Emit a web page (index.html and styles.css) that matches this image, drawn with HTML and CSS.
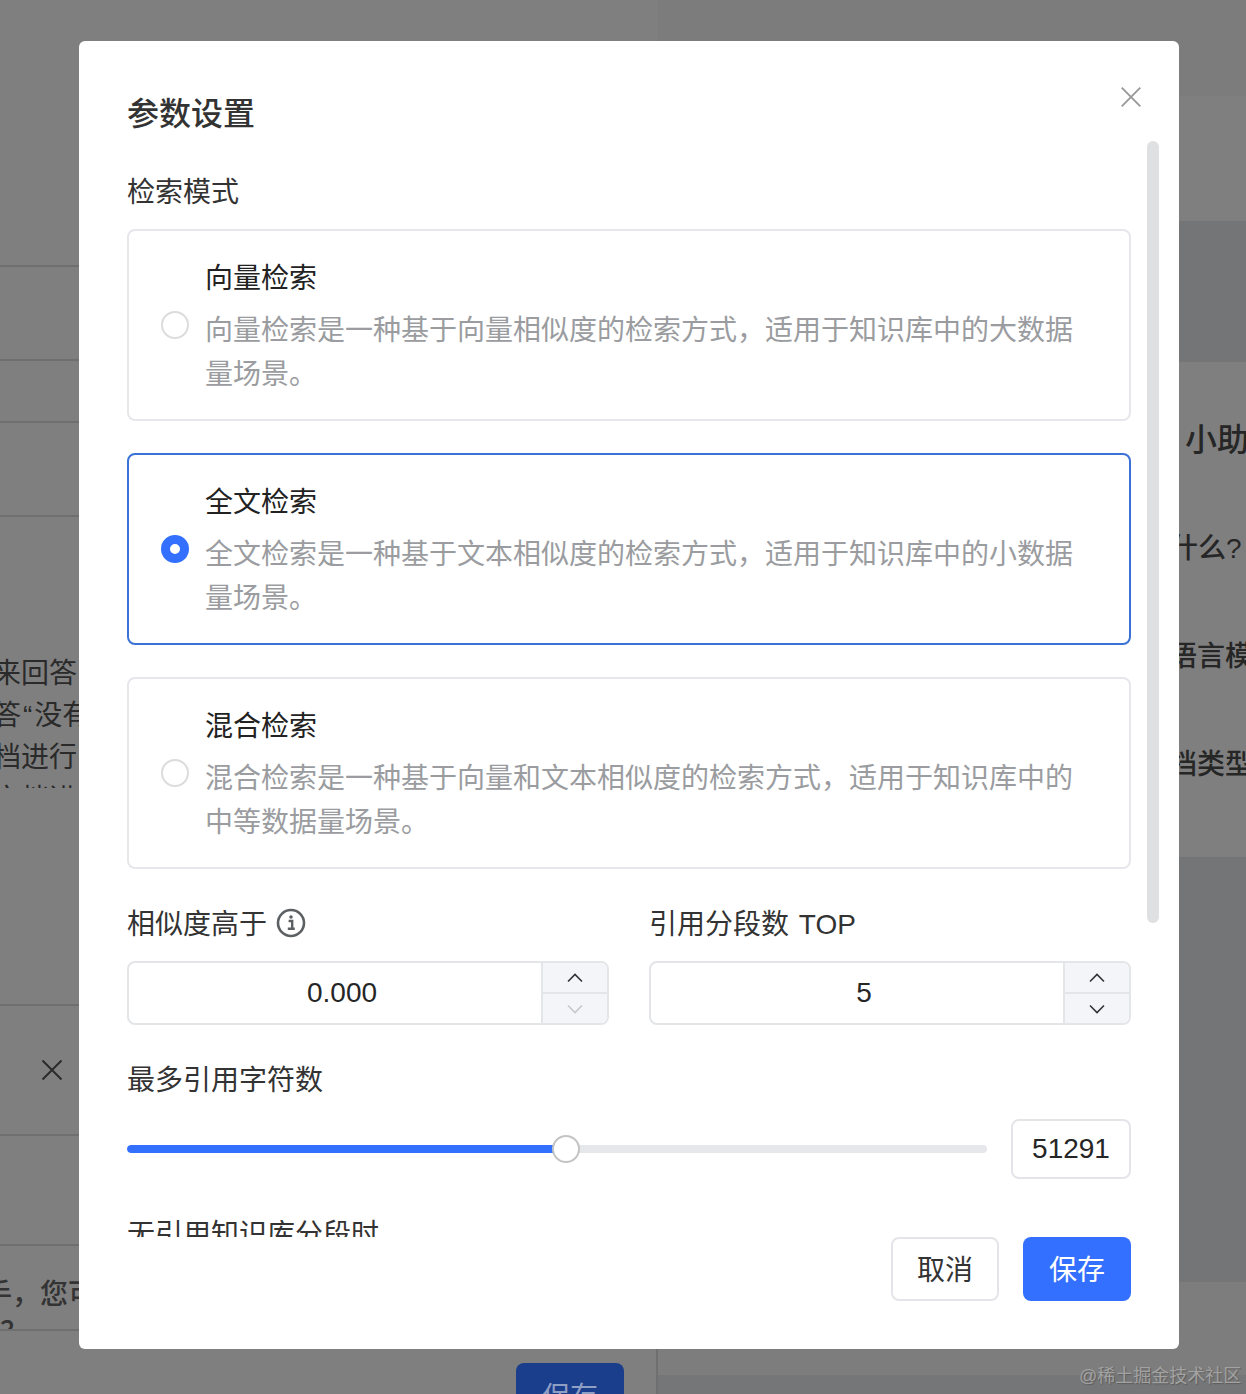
FILE: index.html
```html
<!DOCTYPE html>
<html lang="zh-CN">
<head>
<meta charset="utf-8">
<title>参数设置</title>
<link rel="stylesheet" href="styles.css">
</head>
<body>
<div class="page">
  <div class="bg-left">
    <div class="bl-row bl-r1"></div>
    <div class="bl-row bl-r2"></div>
    <div class="bl-row bl-r3"></div>
    <div class="bl-row bl-r4"></div>
    <div class="bl-text">
      <p>来回答，</p>
      <p>答<span class="bl-quote">“</span>没有</p>
      <p>档进行</p>
      <p>文档进</p>
    </div>
    <div class="bl-row bl-r5"></div>
    <div class="bl-row bl-r6">
      <svg class="bl-x" width="22" height="22" viewBox="0 0 22 22"><path d="M1.5 1.5l19 19M20.5 1.5l-19 19" stroke="#2b2b2b" stroke-width="2" fill="none"/></svg>
    </div>
    <div class="bl-row bl-r7"></div>
    <div class="bl-row bl-r8"><span>手，您可</span><span class="bl-q">？</span></div>
    <div class="bl-foot"><button class="bl-save">保存</button></div>
  </div>
  <div class="bg-right">
    <div class="br-band br-b1"></div>
    <div class="br-band br-b2"></div>
    <div class="br-band br-b3"></div>
    <div class="br-band br-lead"><span class="br-t1">小助</span></div>
    <div class="br-band br-b4"><span class="br-t2">什么?</span></div>
    <div class="br-band br-b4"><span class="br-t3">语言模型</span></div>
    <div class="br-band br-b4"><span class="br-t3">档类型</span></div>
    <div class="br-band br-b5"></div>
    <div class="br-band br-b6"></div>
    <div class="br-band br-b7"></div>
    <div class="br-band br-b8"></div>
  </div>

  <span class="watermark">@稀土掘金技术社区</span>

  <section class="modal">
    <button class="close" aria-label="关闭">
      <svg width="20" height="20" viewBox="0 0 20 20"><path d="M.7.7l18.6 18.6M19.3.7L.7 19.3" stroke="#9a9a9a" stroke-width="1.9" fill="none"/></svg>
    </button>
    <header class="modal-head"><h2 class="modal-title">参数设置</h2></header>
    <div class="scrollbar"></div>
    <div class="modal-body">
      <div class="label">检索模式</div>
      <div class="cards">
        <div class="card">
          <span class="radio"></span>
          <div class="card-text">
            <div class="card-title">向量检索</div>
            <div class="card-desc">向量检索是一种基于向量相似度的检索方式，适用于知识库中的大数据量场景。</div>
          </div>
        </div>
        <div class="card card-on">
          <span class="radio radio-on"></span>
          <div class="card-text">
            <div class="card-title">全文检索</div>
            <div class="card-desc">全文检索是一种基于文本相似度的检索方式，适用于知识库中的小数据量场景。</div>
          </div>
        </div>
        <div class="card">
          <span class="radio"></span>
          <div class="card-text">
            <div class="card-title">混合检索</div>
            <div class="card-desc">混合检索是一种基于向量和文本相似度的检索方式，适用于知识库中的中等数据量场景。</div>
          </div>
        </div>
      </div>

      <div class="fields">
        <div class="field">
          <div class="label label-icon">相似度高于
            <svg class="info" width="30" height="30" viewBox="0 0 30 30"><circle cx="15" cy="15" r="13" fill="none" stroke="#5d6063" stroke-width="2.6"/><path d="M12.6 13h3.6v7.2M11.8 20.8h7" fill="none" stroke="#5d6063" stroke-width="2.4"/><circle cx="15" cy="9" r="1.8" fill="#5d6063"/></svg>
          </div>
          <div class="number">
            <div class="number-val">0.000</div>
            <div class="stepper">
              <div class="step"><svg width="16" height="10" viewBox="0 0 16 10"><path d="M1 8.5l7-7 7 7" fill="none" stroke="#333" stroke-width="1.6"/></svg></div>
              <div class="step"><svg width="16" height="10" viewBox="0 0 16 10"><path d="M1 1.5l7 7 7-7" fill="none" stroke="#c6c8cc" stroke-width="1.6"/></svg></div>
            </div>
          </div>
        </div>
        <div class="field">
          <div class="label">引用分段数 <span class="label-latin">TOP</span></div>
          <div class="number">
            <div class="number-val">5</div>
            <div class="stepper">
              <div class="step"><svg width="16" height="10" viewBox="0 0 16 10"><path d="M1 8.5l7-7 7 7" fill="none" stroke="#333" stroke-width="1.6"/></svg></div>
              <div class="step"><svg width="16" height="10" viewBox="0 0 16 10"><path d="M1 1.5l7 7 7-7" fill="none" stroke="#333" stroke-width="1.6"/></svg></div>
            </div>
          </div>
        </div>
      </div>

      <div class="label label-top">最多引用字符数</div>
      <div class="slider-row">
        <div class="slider">
          <div class="slider-track">
            <div class="slider-fill" style="width:439px"></div>
          </div>
          <span class="slider-thumb"></span>
        </div>
        <div class="slider-val">51291</div>
      </div>

      <div class="label label-top">无引用知识库分段时</div>
    </div>
    <footer class="modal-foot">
      <button class="btn">取消</button>
      <button class="btn btn-primary">保存</button>
    </footer>
  </section>
</div>
</body>
</html>
```

FILE: styles.css
```css
* { box-sizing: border-box; }
html, body { margin: 0; padding: 0; }
body {
  font-family: "Liberation Sans", "Noto Sans CJK SC", sans-serif;
  color: #222;
}
p { margin: 0; }
button { font-family: inherit; }

.page {
  position: relative;
  display: flex;
  width: 1246px;
  height: 1394px;
  overflow: hidden;
  background: #7f7f7f;
}

/* dimmed page behind the dialog */
.bg-left {
  width: 658px;
  flex: none;
  display: flex;
  flex-direction: column;
}
.bl-row { border-bottom: 2px solid #6f6f6f; flex: none; }
.bl-r1 { height: 267px; }
.bl-r2 { height: 94px; }
.bl-r3 { height: 62px; }
.bl-r4 { height: 94px; }
.bl-text {
  height: 271px;
  padding-top: 136px;
  overflow: hidden;
  font-size: 28px;
  line-height: 42px;
  color: #2a2a2a;
  white-space: nowrap;
  margin-left: -7px;
}
.bl-quote { padding: 0 2px; }
.bl-r5 { height: 218px; }
.bl-r6 { height: 130px; display: flex; align-items: center; padding-left: 41px; }
.bl-r7 { height: 110px; }
.bl-r8 {
  height: 85px;
  padding-top: 28px;
  overflow: hidden;
  font-size: 28px;
  line-height: 42px;
  font-weight: 500;
  color: #333;
  white-space: nowrap;
  margin-left: -16px;
  display: flex;
  flex-direction: column;
}
.bl-q { padding-left: 16px; line-height: 34px; }
.bl-foot {
  flex: 1;
  display: flex;
  justify-content: flex-end;
  padding: 32px 32px 0 0;
  border-right: 2px solid #6f6f6f;
  overflow: hidden;
}
.bl-save {
  width: 108px;
  height: 64px;
  border: 0;
  border-radius: 8px;
  background: #1b3e8c;
  color: #8f9fc4;
  font-size: 28px;
  flex: none;
}

.bg-right { flex: 1; min-width: 0; display: flex; flex-direction: column; }
.br-band { flex: none; overflow: hidden; white-space: nowrap; font-size: 28px; font-weight: 500; color: #262626; }
.br-b1 { height: 96px; background: #7c7c7c; }
.br-b2 { height: 125px; background: #7f7f7f; }
.br-b3 { height: 141px; background: #747576; }
.br-lead { height: 131px; padding-top: 57px; font-size: 32px; line-height: 42px; background: #7f7f7f; }
.br-b4 { height: 108px; line-height: 112px; background: #7f7f7f; }
.br-b5 { height: 40px; background: #7f7f7f; }
.br-b6 { height: 425px; background: #747576; }
.br-b7 { height: 93px; background: #7d7d7d; }
.br-b8 { flex: 1; background: #757677; }
.br-t1, .br-t2, .br-t3 { display: block; }
.br-t1 { padding-left: 527px; }
.br-t2 { padding-left: 512px; }
.br-t3 { padding-left: 511px; }

.watermark {
  position: absolute;
  left: 1079px;
  top: 1365px;
  font-size: 18px;
  line-height: 22px;
  color: #a2a2a2;
  white-space: nowrap;
  text-shadow: 1px 1px 1px #5c5c5c;
}

/* dialog */
.modal {
  position: absolute;
  left: 79px;
  top: 41px;
  width: 1100px;
  height: 1308px;
  background: #fff;
  border-radius: 6px;
  display: flex;
  flex-direction: column;
}
.modal-head { padding: 51px 48px 0; height: 100px; flex: none; }
.modal-title {
  margin: 0;
  font-size: 32px;
  line-height: 44px;
  font-weight: 500;
  color: #333;
}
.close {
  position: absolute;
  left: 1042px;
  top: 46px;
  width: 20px;
  height: 20px;
  padding: 0;
  border: 0;
  background: none;
  display: flex;
}
.scrollbar {
  position: absolute;
  left: 1068px;
  top: 100px;
  width: 12px;
  height: 782px;
  border-radius: 6px;
  background: #dfe0e2;
}
.modal-body {
  flex: 1;
  min-height: 0;
  overflow: hidden;
  padding: 28px 48px 0;
}
.label {
  height: 44px;
  font-size: 28px;
  line-height: 48px;
  color: #333;
  margin-bottom: 16px;
}
.label-top { margin-top: 32px; }
.label-icon { display: flex; align-items: center; gap: 9px; padding-top: 4px; }
.label-latin { margin-left: 2px; }
.info { flex: none; margin-top: -4px; }

.cards { display: flex; flex-direction: column; gap: 32px; }
.card {
  display: flex;
  align-items: center;
  gap: 16px;
  height: 192px;
  padding: 20px 32px;
  border: 2px solid #e6e7eb;
  border-radius: 8px;
}
.card-on { border-color: #3b72d6; }
.radio {
  width: 28px;
  height: 28px;
  flex: none;
  border: 2px solid #dcdcdc;
  border-radius: 50%;
  background: #fff;
}
.radio-on { border: 9px solid #3370ff; }
.card-text { padding-top: 4px; }
.card-title { font-size: 28px; line-height: 44px; color: #222; margin-bottom: 8px; }
.card-desc { font-size: 28px; line-height: 44px; color: #9a9c9f; }

.fields { display: flex; gap: 40px; margin-top: 32px; }
.field { flex: 1; min-width: 0; }
.number {
  display: flex;
  height: 64px;
  border: 2px solid #e4e5e8;
  border-radius: 8px;
  overflow: hidden;
}
.number-val {
  flex: 1;
  padding-left: 14px;
  text-align: center;
  font-size: 28px;
  line-height: 60px;
  color: #262626;
}
.stepper {
  width: 66px;
  flex: none;
  display: flex;
  flex-direction: column;
  border-left: 2px solid #e4e5e8;
  background: #f3f5f9;
}
.step {
  flex: 1;
  display: flex;
  align-items: center;
  justify-content: center;
}
.step + .step { border-top: 2px solid #e4e5e8; }

.slider-row { display: flex; align-items: center; gap: 24px; margin-top: 18px; height: 60px; }
.slider { position: relative; flex: 1; height: 28px; display: flex; align-items: center; }
.slider-track { width: 100%; height: 8px; border-radius: 4px; background: #e6e7eb; overflow: hidden; }
.slider-fill { height: 100%; background: #3370ff; border-radius: 4px 0 0 4px; }
.slider-thumb {
  position: absolute;
  left: 425px;
  top: 0;
  width: 28px;
  height: 28px;
  border: 2px solid #c4c4c4;
  border-radius: 50%;
  background: #fff;
}
.slider-val {
  width: 120px;
  height: 60px;
  flex: none;
  border: 2px solid #e4e5e8;
  border-radius: 8px;
  text-align: center;
  font-size: 28px;
  line-height: 56px;
  color: #262626;
}

.modal-foot {
  flex: none;
  display: flex;
  justify-content: flex-end;
  gap: 24px;
  padding: 0 48px 48px;
}
.btn {
  width: 108px;
  height: 64px;
  border: 2px solid #e4e5e8;
  border-radius: 8px;
  background: #fff;
  font-size: 28px;
  color: #333;
  padding: 0 0 3px;
}
.btn-primary { border: 0; background: #3370ff; color: #fff; }
```
